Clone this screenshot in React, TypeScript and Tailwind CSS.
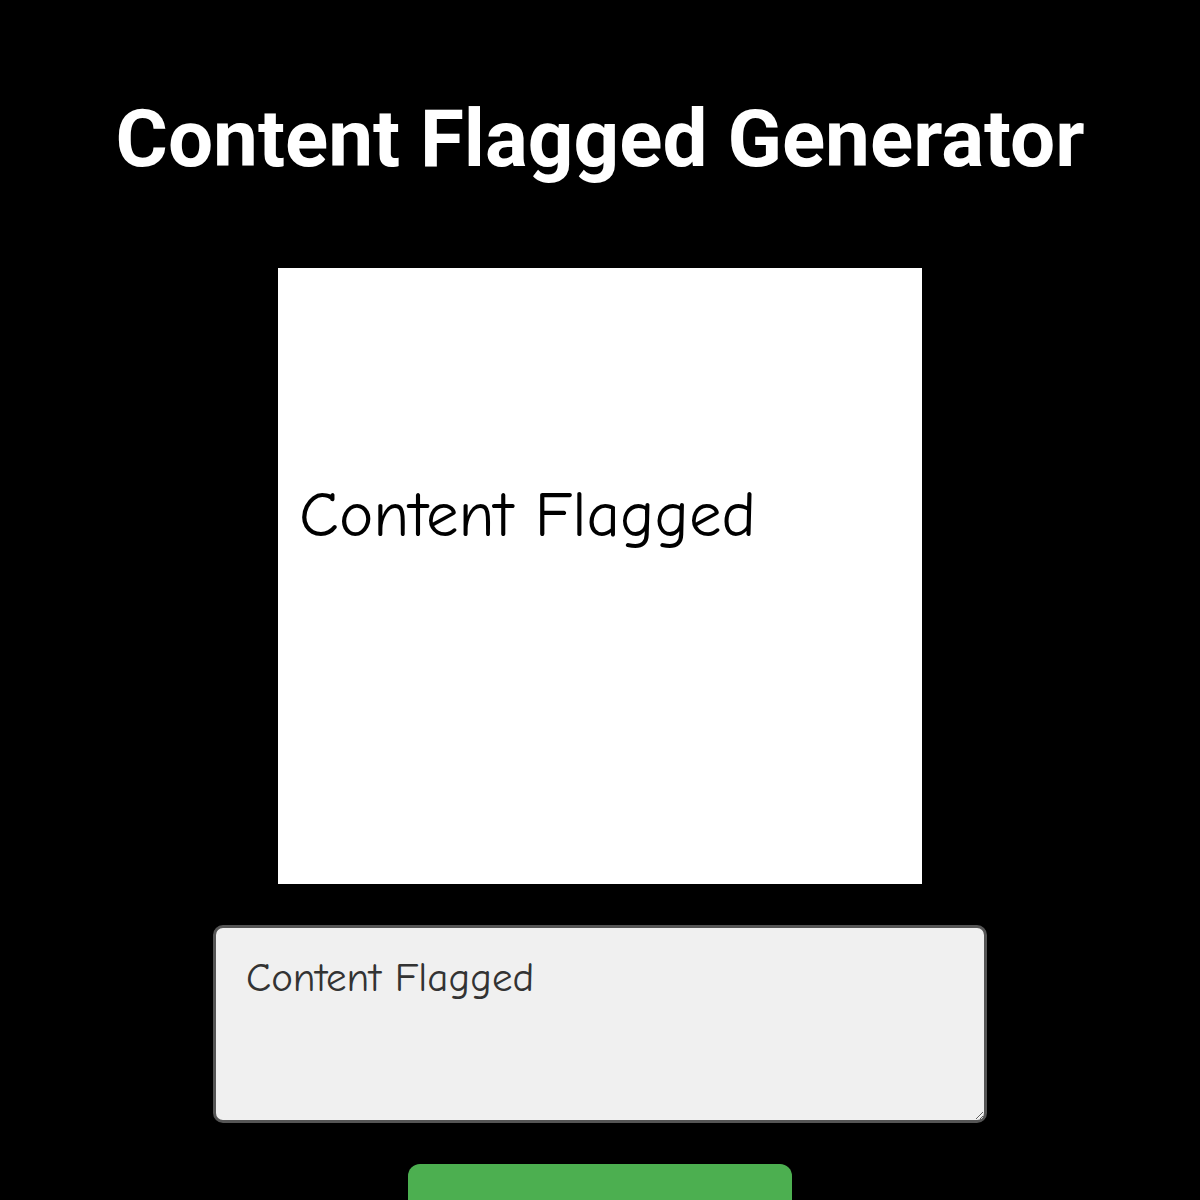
export default function App() {
  return (
    <div className="min-h-[1200px] w-full bg-black flex flex-col items-center">
      <h1 className="mt-[92px] text-white font-bold text-[80px] leading-[94px] font-['Roboto',sans-serif]">
        Content Flagged Generator
      </h1>

      <div className="mt-[82px] w-[644px] h-[616px] bg-white pl-[21px] pt-[207px]">
        <p className="text-black text-[65px] leading-[80px] font-['Comic_Sans_MS','Comic_Neue',cursive]">
          Content Flagged
        </p>
      </div>

      <textarea
        className="mt-[41px] w-[774px] h-[198px] bg-[#f0f0f0] border-[3px] border-[#555] rounded-[10px] px-[30px] py-[25px] text-[41px] leading-[50px] text-[#333] font-['Comic_Sans_MS','Comic_Neue',cursive] outline-none"
        defaultValue="Content Flagged"
      />

      <button className="mt-[41px] w-[384px] h-[60px] bg-[#4caf50] rounded-[12px]"></button>
    </div>
  );
}
